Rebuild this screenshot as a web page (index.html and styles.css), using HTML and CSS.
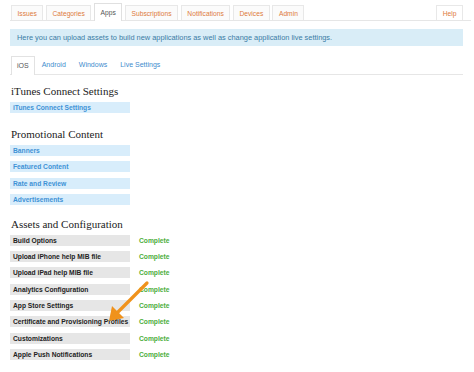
FILE: index.html
```html
<!DOCTYPE html>
<html>
<head>
<meta charset="utf-8">
<link rel="stylesheet" href="styles.css">
</head>
<body>
<div class="page">
  <ul class="tabs">
    <li class="tab">Issues</li>
    <li class="tab">Categories</li>
    <li class="tab active">Apps</li>
    <li class="tab">Subscriptions</li>
    <li class="tab">Notifications</li>
    <li class="tab">Devices</li>
    <li class="tab">Admin</li>
    <li class="tab help">Help</li>
  </ul>
  <div class="info">Here you can upload assets to build new applications as well as change application live settings.</div>
  <ul class="subtabs">
    <li class="subtab active">iOS</li>
    <li class="subtab">Android</li>
    <li class="subtab">Windows</li>
    <li class="subtab">Live Settings</li>
  </ul>

  <h2 class="heading h-first">iTunes Connect Settings</h2>
  <div class="links">
    <div class="link">iTunes Connect Settings</div>
  </div>

  <h2 class="heading h-promo">Promotional Content</h2>
  <div class="links">
    <div class="link">Banners</div>
    <div class="link">Featured Content</div>
    <div class="link">Rate and Review</div>
    <div class="link">Advertisements</div>
  </div>

  <h2 class="heading h-assets">Assets and Configuration</h2>
  <div class="assets">
    <div class="row"><div class="label">Build Options</div><div class="status">Complete</div></div>
    <div class="row"><div class="label">Upload iPhone help MIB file</div><div class="status">Complete</div></div>
    <div class="row"><div class="label">Upload iPad help MIB file</div><div class="status">Complete</div></div>
    <div class="row"><div class="label">Analytics Configuration</div><div class="status">Complete</div></div>
    <div class="row"><div class="label">App Store Settings</div><div class="status">Complete</div></div>
    <div class="row"><div class="label">Certificate and Provisioning Profiles</div><div class="status">Complete</div></div>
    <div class="row"><div class="label">Customizations</div><div class="status">Complete</div></div>
    <div class="row"><div class="label">Apple Push Notifications</div><div class="status">Complete</div></div>
  </div>
</div>
<svg class="arrow" width="474" height="372" viewBox="0 0 474 372">
  <line x1="147" y1="283" x2="117" y2="313" stroke="#f0921c" stroke-width="3.2" stroke-linecap="round"/>
  <polygon points="109,321 112,306 124,318" fill="#f0921c"/>
</svg>
</body>
</html>
```
FILE: styles.css
```css
html, body {
  margin: 0;
  padding: 0;
  background: #ffffff;
}
body {
  font-family: "Liberation Sans", Arial, sans-serif;
  font-size: 6.7px;
  color: #333;
  position: relative;
  width: 474px;
  height: 372px;
  overflow: hidden;
}
.page {
  padding: 0 11px 0 10px;
}
.tabs {
  list-style: none;
  margin: 0 -8px 0 0;
  padding: 0 8px 0 1px;
  display: flex;
  align-items: flex-end;
  gap: 2.7px;
  height: 20px;
  border-bottom: 1px solid #e6e6e6;
}
.tab {
  height: 15px;
  line-height: 15px;
  padding: 0 5.5px;
  border: 1px solid #e8e8e8;
  border-bottom: none;
  background: #fbfbfb;
  color: #dd7a3c;
  box-sizing: border-box;
}
.tab.active {
  height: 18px;
  line-height: 17px;
  background: #fff;
  color: #555;
  border-color: #e0e0e0;
  margin-bottom: -1px;
}
.tab.help {
  margin-left: auto;
  background: #fff;
}
.info {
  margin-top: 8px;
  height: 17px;
  line-height: 17px;
  background: #d9edf7;
  color: #3a7ca5;
  padding-left: 7px;
  font-size: 7.4px;
}
.subtabs {
  list-style: none;
  margin: 10px 0 0 0;
  padding: 0 0 0 1px;
  display: flex;
  align-items: flex-end;
  height: 18px;
  border-bottom: 1px solid #e6e6e6;
  font-size: 7px;
}
.subtab {
  height: 18px;
  line-height: 18px;
  padding: 0 6.5px;
  color: #3f8ccd;
  box-sizing: border-box;
}
.subtab.active {
  color: #555;
  background: #fff;
  border: 1px solid #e2e2e2;
  border-bottom: none;
  margin-bottom: -1px;
  height: 19px;
  padding: 0 5px;
  margin-right: 0.5px;
}
.heading {
  font-family: "Liberation Serif", "Times New Roman", serif;
  font-weight: normal;
  font-size: 11px;
  line-height: 12px;
  color: #222;
  margin: 0;
  padding-left: 1px;
}
.h-first { margin-top: 10px; }
.h-promo { margin-top: 15px; }
.h-assets { margin-top: 13px; }
.links, .assets {
  display: flex;
  flex-direction: column;
  gap: 5.3px;
  margin-top: 5px;
}
.link {
  width: 120px;
  height: 11px;
  line-height: 11px;
  background: #d8edfb;
  color: #3e92d6;
  font-weight: bold;
  padding-left: 3px;
  box-sizing: border-box;
}
.row {
  display: flex;
  align-items: center;
  height: 11px;
}
.label {
  width: 120px;
  height: 11px;
  line-height: 11px;
  background: #e6e6e6;
  color: #222;
  font-weight: bold;
  padding-left: 3px;
  box-sizing: border-box;
  white-space: nowrap;
}
.status {
  margin-left: 9px;
  color: #4cae3c;
  font-weight: bold;
}
.arrow {
  position: absolute;
  left: 0;
  top: 0;
  pointer-events: none;
}
```
